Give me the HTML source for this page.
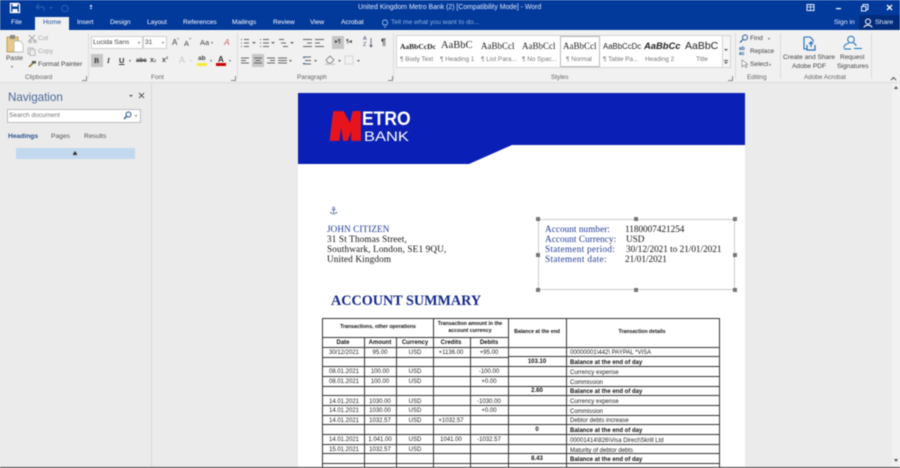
<!DOCTYPE html>
<html><head><meta charset="utf-8"><style>
html,body{margin:0;padding:0}
body{width:900px;height:468px;overflow:hidden;position:relative;background:#ebebeb;font-family:"Liberation Sans",sans-serif}
#w{position:absolute;left:0;top:0;width:900px;height:468px;overflow:hidden;filter:blur(.45px)}
.a{position:absolute}
.t{position:absolute;white-space:nowrap;line-height:1}
.u{font-size:6.6px;color:#444}
.g{font-size:6.4px;color:#666}
.tab{font-size:6.6px;color:#fff;top:20px}
.s{font-family:"Liberation Serif",serif;font-size:9.2px;color:#111}
.sb{font-family:"Liberation Serif",serif;font-size:9.2px;color:#1f3a93}
.sty{font-family:"Liberation Serif",serif;font-size:9px;color:#222;top:42px}
.lab{font-size:6.4px;color:#777;top:57px}
.h{position:absolute;background:#333;height:1px}
.v{position:absolute;background:#333;width:1px}
.c{position:absolute;white-space:nowrap;line-height:1;font-size:6px;color:#222;text-align:center;transform:translateX(-50%)}
.d{position:absolute;white-space:nowrap;line-height:1;font-size:6px;color:#222;left:570px}
.b{font-weight:bold;color:#111}
.k{font-size:5.2px}
.hd{position:absolute;width:4px;height:4px;background:#777}
.ar{position:absolute;border:1.5px solid transparent;border-top:2px solid #666}
.dl{position:absolute;width:4px;height:4px;border-right:1px solid #888;border-bottom:1px solid #888}
.sep{position:absolute;top:33px;width:1px;height:46px;background:#dcdcdc}
</style></head><body><div id="w">

<div class="a" style="left:0;top:0;width:900px;height:30px;background:#023a9c"></div>
<div class="a" style="left:0;top:30px;width:900px;height:52px;background:#f1f1f1"></div>
<div class="a" style="left:0;top:82px;width:900px;height:1px;background:#dcdcdc"></div>
<div class="a" style="left:35px;top:17px;width:34px;height:13px;background:#f1f1f1"></div>

<svg class="a" style="left:9px;top:2px" width="12" height="12" viewBox="0 0 12 12"><path d="M1.5 1.5h8l1 1v8h-9z" fill="none" stroke="#fff" stroke-width="1.3"/><rect x="3.5" y="1.5" width="5" height="3" fill="#fff"/><rect x="3.5" y="7" width="5" height="3.5" fill="#fff"/></svg>
<svg class="a" style="left:34px;top:2px" width="60" height="12" viewBox="0 0 60 12"><path d="M2 5l3-3M2 5l3 2M2 5h6c2 0 3 2 2 4" fill="none" stroke="#2a5cb0" stroke-width="1.2"/><path d="M15 5l2 2 2-2" fill="#2a5cb0"/><circle cx="31" cy="6.5" r="3.2" fill="none" stroke="#2a5cb0" stroke-width="1.2"/></svg>
<div class="a" style="left:90px;top:5px;width:2px;height:2px;background:#cfe0f5"></div>
<div class="a" style="left:90px;top:8px;width:2px;height:1px;background:#cfe0f5"></div>

<div class="t" style="left:358px;top:4.5px;font-size:6.9px;color:#dfe8f7">United Kingdom Metro Bank (2) [Compatibility Mode] - Word</div>

<div class="t tab" style="left:11px;font-size:6.8px">File</div>
<div class="t tab" style="left:43px;color:#1e4c9a;font-size:6.8px">Home</div>
<div class="t tab" style="left:77px">Insert</div>
<div class="t tab" style="left:110px">Design</div>
<div class="t tab" style="left:147px">Layout</div>
<div class="t tab" style="left:183px">References</div>
<div class="t tab" style="left:232px">Mailings</div>
<div class="t tab" style="left:273px">Review</div>
<div class="t tab" style="left:310px">View</div>
<div class="t tab" style="left:341px">Acrobat</div>
<svg class="a" style="left:381px;top:19px" width="8" height="9" viewBox="0 0 8 9"><path d="M2.5 6C1 4.5 1 1 4 1s3 3.5 1.500 5zM3 8h2" fill="none" stroke="#8fb4e8" stroke-width=".9"/></svg>
<div class="t tab" style="left:391px;color:#8fb0e0;font-size:6.7px">Tell me what you want to do...</div>

<svg class="a" style="left:804px;top:2px" width="90" height="12" viewBox="0 0 90 12"><rect x="3" y="2.5" width="7" height="6" fill="none" stroke="#e8eefa" stroke-width="1"/><path d="M6.5 3v5M3 5h7" stroke="#e8eefa" stroke-width=".8"/><rect x="32" y="6" width="5" height="1.2" fill="#fff"/><rect x="59" y="2.500" width="5" height="5" fill="none" stroke="#e8eefa"/><rect x="57.5" y="4.5" width="4.5" height="4.5" fill="#023a9c" stroke="#e8eefa"/><path d="M83 3l5 5M88 3l-5 5" stroke="#fff" stroke-width="1.3"/></svg>
<div class="a" style="left:859px;top:15px;width:41px;height:15px;background:#012c7c"></div>
<div class="t" style="left:834px;top:20px;font-size:6.8px;color:#e4ecfa">Sign in</div>
<svg class="a" style="left:863px;top:18px" width="10" height="10" viewBox="0 0 10 10"><circle cx="5" cy="3.5" r="2.5" fill="none" stroke="#fff"/><path d="M1 9.500c.5-3 7.500-3 8 0" fill="none" stroke="#fff"/></svg>
<div class="t" style="left:875px;top:20px;font-size:6.8px;color:#e4ecfa">Share</div>

<!-- Clipboard -->
<svg class="a" style="left:6px;top:34px" width="18" height="20" viewBox="0 0 18 20"><rect x="1" y="3" width="11" height="15" fill="#e8c98a" stroke="#a88848" stroke-width=".7"/><rect x="4" y="1" width="5" height="4" fill="#888"/><path d="M8 7h6l3 3v8H8z" fill="#fff" stroke="#aaa" stroke-width=".7"/></svg>
<div class="t u" style="left:6px;top:56px">Paste</div>
<div class="ar" style="left:11px;top:66px"></div>
<svg class="a" style="left:28px;top:34px" width="9" height="9" viewBox="0 0 9 9"><path d="M1 1l6 6M7 1L1 7" stroke="#aaa"/><circle cx="2" cy="7.5" r="1.3" fill="none" stroke="#aaa"/><circle cx="7" cy="7.5" r="1.3" fill="none" stroke="#aaa"/></svg>
<div class="t" style="left:38px;top:36px;font-size:6.5px;color:#a8a8a8">Cut</div>
<svg class="a" style="left:27px;top:47px" width="9" height="9" viewBox="0 0 9 9"><rect x="1" y="1" width="5" height="6" fill="none" stroke="#bbb"/><rect x="3" y="2.5" width="5" height="6" fill="#eee" stroke="#bbb"/></svg>
<div class="t" style="left:38px;top:49px;font-size:6.5px;color:#a8a8a8">Copy</div>
<svg class="a" style="left:28px;top:60px" width="9" height="8" viewBox="0 0 9 8"><path d="M1 7l4-4" stroke="#a08030" stroke-width="1.8"/><rect x="4" y="1" width="4" height="2.5" fill="#555"/></svg>
<div class="t u" style="left:38px;top:62px;font-size:6.7px">Format Painter</div>
<div class="t g" style="left:25px;top:75px">Clipboard</div>
<div class="dl" style="left:82px;top:76px"></div>
<div class="sep" style="left:88px"></div>

<!-- Font -->
<div class="a" style="left:91px;top:36px;width:52px;height:13px;background:#fff;border:1px solid #d0d0d0;box-sizing:border-box"></div>
<div class="a" style="left:143px;top:36px;width:24px;height:13px;background:#fff;border:1px solid #d0d0d0;box-sizing:border-box"></div>
<div class="t u" style="left:93px;top:40px">Lucida Sans</div>
<div class="t u" style="left:145px;top:40px">31</div>
<div class="ar" style="left:138px;top:42px"></div>
<div class="ar" style="left:162px;top:42px"></div>
<div class="t u" style="left:172px;top:39px;font-size:8px">A</div><div class="t" style="left:177px;top:37px;font-size:4px;color:#444">˄</div>
<div class="t u" style="left:184px;top:40px;font-size:7.5px">A</div><div class="t" style="left:189px;top:37px;font-size:4px;color:#444">˅</div>
<div class="t u" style="left:200px;top:39px;font-size:7.5px">Aa</div>
<div class="ar" style="left:211px;top:42px"></div>
<div class="t" style="left:224px;top:38px;font-size:8.5px;color:#c66;font-style:italic">A</div>
<div class="a" style="left:91px;top:54px;width:12px;height:13px;background:#c6c6c6"></div>
<div class="t" style="left:94px;top:57px;font-size:7.5px;font-weight:bold;color:#333;font-family:'Liberation Serif',serif">B</div>
<div class="t" style="left:107px;top:57px;font-size:7.5px;font-style:italic;font-weight:bold;color:#333;font-family:'Liberation Serif',serif">I</div>
<div class="t" style="left:119px;top:57px;font-size:7.5px;font-weight:bold;color:#333;text-decoration:underline">U</div>
<div class="ar" style="left:129px;top:60px"></div>
<div class="t" style="left:136px;top:58px;font-size:6.2px;font-weight:bold;color:#444;text-decoration:line-through">abc</div>
<div class="t u" style="left:150px;top:57px;font-size:7px;font-weight:bold">x<span style="font-size:4px">2</span></div>
<div class="t u" style="left:162px;top:57px;font-size:7px;font-weight:bold">x<span style="font-size:4px;position:relative;top:-3px">2</span></div>
<div class="t" style="left:179px;top:56px;font-size:9px;color:#c8c8c8">A</div>
<div class="ar" style="left:190px;top:60px;border-top-color:#ccc"></div>
<div class="t" style="left:198px;top:56px;font-size:6.5px;color:#444;font-weight:bold">ab</div>
<div class="a" style="left:197px;top:63px;width:10px;height:3px;background:#f2ec30"></div>
<div class="ar" style="left:210px;top:60px"></div>
<div class="t" style="left:218px;top:56px;font-size:8px;color:#333;font-weight:bold">A</div>
<div class="a" style="left:216px;top:63px;width:10px;height:2.5px;background:#c00"></div>
<div class="ar" style="left:229px;top:60px"></div>
<div class="t g" style="left:151px;top:75px">Font</div>
<div class="dl" style="left:231px;top:76px"></div>
<div class="sep" style="left:237px"></div>

<!-- Paragraph -->
<div class="a" style="left:252px;top:54px;width:12px;height:13px;background:#c8c8c8"></div>
<div class="a" style="left:332px;top:36px;width:12px;height:13px;background:#c6c6c6"></div>
<svg class="a" style="left:240px;top:37px" width="150" height="30" viewBox="0 0 150 30">
<g stroke="#666" stroke-width=".9" fill="none">
<path d="M1 2.5h1M4 2.5h5M1 6h1M4 6h5M1 9.500h1M4 9.500h5"/>
<path d="M20 2.5h1M23 2.5h6M20 6h1M23 6h6M20 9.5h1M23 9.5h6"/>
<path d="M39 2.5h5M41 6h5M43 9.5h5"/>
<path d="M63 2.5h9M67 6h5M63 9.5h9M75 2.5h9M75 6h5M75 9.5h9"/>
<path d="M1 21h8M1 23.500h5M1 26h8M14 21h8M15.500 23.500h5M14 26h8M27 21h8M30 23.500h5M27 26h8M38 21h9M38 23.500h9M38 26h9"/>
<path d="M65 20h6M65 23.500h6M65 27h6"/>
</g>
<path d="M62.500 21l1.500-2 1.500 2zM62.500 26l1.500 2 1.500-2z" fill="#3a6aa8"/>
<path d="M12 5l2 2 2-2zM31 5l2 2 2-2zM50 5l2 2 2-2zM49 23l1.500 2 1.500-2zM74 23l1.500 2 1.500-2zM98 23l1.500 2 1.500-2zM117 23l1.500 2 1.500-2z" fill="#666"/>
<path d="M86 23l4-4 4 4-3 3h-3z" fill="none" stroke="#777" stroke-width=".8"/>
<rect x="85" y="26.500" width="10" height="1.500" fill="#ccc"/>
<rect x="105" y="19" width="8" height="8" fill="none" stroke="#aaa" stroke-width=".8" stroke-dasharray="1 1"/>
</svg>
<div class="t u" style="left:335px;top:40px;font-weight:bold;font-size:5.5px">▸¶</div>
<div class="t u" style="left:346px;top:40px;font-weight:bold;font-size:5.5px">¶◂</div>
<div class="t" style="left:363px;top:37px;font-size:5.5px;color:#446;line-height:5.5px;white-space:normal;width:8px">A<br>Z</div>
<svg class="a" style="left:369px;top:38px" width="4" height="10" viewBox="0 0 4 10"><path d="M2 0v9M.5 7L2 9l1.500-2" fill="none" stroke="#557" stroke-width=".8"/></svg>
<div class="t" style="left:381px;top:38px;font-size:9px;color:#444;font-weight:bold">¶</div>
<div class="t g" style="left:297px;top:75px">Paragraph</div>
<div class="dl" style="left:388px;top:76px"></div>
<div class="sep" style="left:393px"></div>

<!-- Styles -->
<div class="a" style="left:396px;top:35px;width:335px;height:33px;background:#fff;border:1px solid #d4d4d4;box-sizing:border-box"></div>
<div class="a" style="left:560px;top:36px;width:40px;height:31px;border:1.5px solid #b8b8b8;box-sizing:border-box"></div>
<div class="t sty" style="left:400px;top:43px;font-size:7.5px;font-weight:bold">AaBbCcDc</div>
<div class="t sty" style="left:441px;top:41px;font-size:10.5px">AaBbC</div>
<div class="t sty" style="left:481px;top:42px;font-size:9px">AaBbCcl</div>
<div class="t sty" style="left:522px;top:42px;font-size:9px">AaBbCcl</div>
<div class="t sty" style="left:563px;top:42px;font-size:9px">AaBbCcl</div>
<div class="t sty" style="left:603px;top:43px;font-size:7.8px;font-family:'Liberation Sans',sans-serif">AaBbCcDc</div>
<div class="t sty" style="left:644px;top:41px;font-size:9.4px;font-family:'Liberation Sans',sans-serif;font-style:italic;font-weight:bold">AaBbCc</div>
<div class="t sty" style="left:685px;top:41px;font-size:10.5px;font-family:'Liberation Sans',sans-serif">AaBbC</div>
<div class="t lab" style="left:400px">¶ Body Text</div>
<div class="t lab" style="left:440px">¶ Heading 1</div>
<div class="t lab" style="left:481px">¶ List Para...</div>
<div class="t lab" style="left:522px">¶ No Spac...</div>
<div class="t lab" style="left:566px">¶ Normal</div>
<div class="t lab" style="left:603px">¶ Table Pa...</div>
<div class="t lab" style="left:645px">Heading 2</div>
<div class="t lab" style="left:696px">Title</div>
<div class="a" style="left:722px;top:35px;width:9px;height:33px;background:#f6f6f6;border:1px solid #d4d4d4;box-sizing:border-box"></div>
<div class="a" style="left:724px;top:49px;border:2px solid transparent;border-top:2px solid #555"></div>
<div class="a" style="left:724px;top:60px;width:4px;height:1px;background:#555"></div>
<div class="a" style="left:724px;top:62px;border:2px solid transparent;border-top:2px solid #555"></div>
<div class="t g" style="left:551px;top:75px">Styles</div>
<div class="dl" style="left:728px;top:76px"></div>
<div class="sep" style="left:735px"></div>

<!-- Editing -->
<svg class="a" style="left:739px;top:34px" width="10" height="9" viewBox="0 0 10 9"><circle cx="6" cy="3.5" r="2.5" fill="none" stroke="#2b5c9e" stroke-width="1"/><path d="M4 5.5L1 8.5" stroke="#2b5c9e" stroke-width="1.2"/></svg>
<div class="t u" style="left:750px;top:36px">Find</div>
<div class="ar" style="left:768px;top:38px"></div>
<div class="t" style="left:739px;top:47px;font-size:5px;line-height:5px;color:#2b5c9e;white-space:normal;width:9px;font-weight:bold">ab<br>ac</div>
<div class="t u" style="left:750px;top:49px">Replace</div>
<svg class="a" style="left:741px;top:59px" width="7" height="9" viewBox="0 0 7 9"><path d="M1 1v7l2-2 2 2.5 1-.5-1.500-2.500H7z" fill="#fff" stroke="#888" stroke-width=".7"/></svg>
<div class="t u" style="left:750px;top:62px">Select</div>
<div class="ar" style="left:769px;top:64px"></div>
<div class="t g" style="left:747px;top:75px">Editing</div>
<div class="sep" style="left:780px"></div>

<!-- Acrobat -->
<svg class="a" style="left:802px;top:36px" width="16" height="16" viewBox="0 0 16 16"><path d="M2 1h6l3 3v2M2 1v12h3" fill="none" stroke="#1f6fb8" stroke-width="1.1"/><path d="M5 9v5h8V9M9 11V6M7 8l2-2 2 2" fill="none" stroke="#1f6fb8" stroke-width="1.2"/></svg>
<svg class="a" style="left:843px;top:35px" width="20" height="17" viewBox="0 0 20 17"><circle cx="8" cy="4.500" r="3.300" fill="none" stroke="#1f6fb8" stroke-width="1"/><path d="M1 13c0-4 3-4 5-5M10 8c2 .5 3 1.500 3 3" fill="none" stroke="#1f6fb8" stroke-width="1"/><path d="M1 14h7M11 13.500h8" stroke="#1f6fb8" stroke-width="1"/></svg>
<div class="t u" style="left:783px;top:55px">Create and Share</div>
<div class="t u" style="left:792px;top:64px">Adobe PDF</div>
<div class="t u" style="left:840px;top:55px">Request</div>
<div class="t u" style="left:837px;top:64px">Signatures</div>
<div class="t g" style="left:804px;top:75px">Adobe Acrobat</div>
<div class="sep" style="left:871px"></div>
<svg class="a" style="left:890px;top:76px" width="7" height="5" viewBox="0 0 7 5"><path d="M1 4l2.500-2.500L6 4" fill="none" stroke="#555"/></svg>

<!-- Nav pane -->
<div class="a" style="left:0;top:83px;width:151px;height:385px;background:#ebebeb;border-right:1px solid #d8d8d8"></div>
<div class="t" style="left:8px;top:92px;font-size:11.6px;color:#4a6898">Navigation</div>
<div class="a" style="left:129px;top:95px;border:2px solid transparent;border-top:2.5px solid #555"></div>
<svg class="a" style="left:138px;top:92px" width="7" height="7" viewBox="0 0 7 7"><path d="M1 1l5 5M6 1L1 6" stroke="#555" stroke-width="1"/></svg>
<div class="a" style="left:7px;top:109px;width:134px;height:14px;background:#fff;border:1px solid #bdbdbd;box-sizing:border-box"></div>
<div class="t" style="left:9px;top:113px;font-size:6.5px;color:#777">Search document</div>
<svg class="a" style="left:123px;top:111px" width="9" height="9" viewBox="0 0 9 9"><circle cx="5.5" cy="3.5" r="2.5" fill="none" stroke="#1f4f8f" stroke-width="1"/><path d="M3.500 5.500L1 8" stroke="#1f4f8f" stroke-width="1.3"/></svg>
<div class="ar" style="left:135px;top:115px"></div>
<div class="t" style="left:8px;top:134px;font-size:6.7px;font-weight:bold;color:#2c5290">Headings</div>
<div class="t" style="left:51px;top:134px;font-size:6.7px;color:#555">Pages</div>
<div class="t" style="left:84px;top:134px;font-size:6.7px;color:#555">Results</div>
<div class="a" style="left:16px;top:148px;width:119px;height:11px;background:#c2d8ef"></div>
<div class="a" style="left:73px;top:151px;border-left:2px solid transparent;border-right:2px solid transparent;border-bottom:3px solid #333"></div>
<div class="a" style="left:73px;top:154px;width:4px;height:1px;background:#333"></div>

<!-- doc -->
<div class="a" style="left:892px;top:83px;width:8px;height:385px;background:#f1f1f1"></div>
<svg class="a" style="left:893px;top:85px" width="6" height="5" viewBox="0 0 6 5"><path d="M3 1L1 4h4z" fill="#555"/></svg>
<svg class="a" style="left:893px;top:458px" width="6" height="5" viewBox="0 0 6 5"><path d="M3 4L1 1h4z" fill="#555"/></svg>
<div class="a" style="left:298px;top:93px;width:447px;height:375px;background:#fff"></div>
<svg class="a" style="left:298px;top:93px" width="447" height="72" viewBox="0 0 447 72"><path d="M0 0H447V52H214L171 71H0z" fill="#0a1fb5"/></svg>

<!-- logo -->
<svg class="a" style="left:326px;top:109px" width="38" height="35" viewBox="0 0 38 35"><path d="M4 31.500L7.500 2.500H17.500L24 15 27 2.500H34.500V31.500H25.500V20L21.500 31.500H17.500L15 16 13 31.500z" fill="#e8141c" stroke="#e8141c" stroke-width=".8" stroke-linejoin="round"/></svg>
<div class="t" style="left:361.5px;top:109.5px;font-size:19px;font-weight:bold;color:#fff;transform:scaleX(.92);transform-origin:left top">ETRO</div>
<div class="t" style="left:364px;top:130.2px;font-size:13.5px;color:#fff;transform:scaleX(1.22);transform-origin:left top">BANK</div>

<div class="t" style="left:329px;top:207px;font-size:10px;color:#3a5a9a;font-family:'DejaVu Sans',sans-serif">⚓</div>
<div class="t sb" style="left:327px;top:225px;letter-spacing:.08px">JOHN CITIZEN</div>
<div class="t s" style="left:327px;top:235px;letter-spacing:.15px">31 St Thomas Street,</div>
<div class="t s" style="left:327px;top:245px;letter-spacing:.15px">Southwark, London, SE1 9QU,</div>
<div class="t s" style="left:327px;top:255px;letter-spacing:.15px">United Kingdom</div>

<!-- selection box -->
<div class="a" style="left:538px;top:219px;width:197px;height:71px;border:1px dotted #999;box-sizing:border-box"></div>
<div class="hd" style="left:536px;top:217px"></div><div class="hd" style="left:634px;top:217px"></div><div class="hd" style="left:733px;top:217px"></div>
<div class="hd" style="left:536px;top:253px"></div><div class="hd" style="left:733px;top:253px"></div>
<div class="hd" style="left:536px;top:288px"></div><div class="hd" style="left:634px;top:288px"></div><div class="hd" style="left:733px;top:288px"></div>
<div class="t sb" style="left:545px;top:225px;letter-spacing:.06px">Account number:</div>
<div class="t sb" style="left:545px;top:235px;letter-spacing:.06px">Account Currency:</div>
<div class="t sb" style="left:545px;top:245px;letter-spacing:.3px">Statement period:</div>
<div class="t sb" style="left:545px;top:255px;letter-spacing:.33px">Statement date:</div>
<div class="t s" style="left:625px;top:225px">1180007421254</div>
<div class="t s" style="left:626px;top:235px">USD</div>
<div class="t s" style="left:626px;top:245px">30/12/2021 to 21/01/2021</div>
<div class="t s" style="left:625px;top:255px">21/01/2021</div>

<div class="t" style="left:331px;top:294px;font-family:'Liberation Serif',serif;font-size:14.2px;font-weight:bold;color:#15288a">ACCOUNT SUMMARY</div>

<!-- table lines -->
<div class="h" style="left:322px;top:318px;width:398px"></div>
<div class="h" style="left:322px;top:337px;width:186px"></div>
<div class="h" style="left:322px;top:347px;width:398px"></div>
<div class="h" style="left:322px;top:357px;width:186px"></div><div class="h" style="left:508px;top:356px;width:212px"></div>
<div class="h" style="left:322px;top:366px;width:398px"></div>
<div class="h" style="left:322px;top:376px;width:398px"></div>
<div class="h" style="left:322px;top:386px;width:398px"></div>
<div class="h" style="left:322px;top:395px;width:398px"></div>
<div class="h" style="left:322px;top:405px;width:398px"></div>
<div class="h" style="left:322px;top:415px;width:398px"></div>
<div class="h" style="left:322px;top:424px;width:398px"></div>
<div class="h" style="left:322px;top:434px;width:398px"></div>
<div class="h" style="left:322px;top:444px;width:398px"></div>
<div class="h" style="left:322px;top:453px;width:398px"></div>
<div class="h" style="left:322px;top:463px;width:398px"></div>
<div class="v" style="left:322px;top:318px;height:150px"></div>
<div class="v" style="left:364px;top:337px;height:131px"></div>
<div class="v" style="left:396px;top:337px;height:131px"></div>
<div class="v" style="left:433px;top:318px;height:150px"></div>
<div class="v" style="left:470px;top:337px;height:131px"></div>
<div class="v" style="left:508px;top:318px;height:150px"></div>
<div class="v" style="left:566px;top:318px;height:150px"></div>
<div class="v" style="left:719px;top:318px;height:150px"></div>
<div class="a" style="left:0;top:466.5px;width:900px;height:2px;background:#3a3a3a"></div>

<!-- table headers -->
<div class="c b k" style="left:378px;top:325px">Transactions, other operations</div>
<div class="c b k" style="left:470px;top:322px">Transaction amount in the</div>
<div class="c b k" style="left:470px;top:329px">account currency</div>
<div class="c b k" style="left:537px;top:330px">Balance at the end</div>
<div class="c b k" style="left:642px;top:330px">Transaction details</div>
<div class="c b" style="left:343px;top:340px">Date</div>
<div class="c b" style="left:380px;top:340px">Amount</div>
<div class="c b" style="left:415px;top:340px">Currency</div>
<div class="c b" style="left:451px;top:340px">Credits</div>
<div class="c b" style="left:489px;top:340px">Debits</div>

<!-- rows -->
<div class="c" style="left:344px;top:350px">30/12/2021</div><div class="c" style="left:380px;top:350px">95.00</div><div class="c" style="left:415px;top:350px">USD</div><div class="c" style="left:451px;top:350px">+1136.00</div><div class="c" style="left:489px;top:350px">+95.00</div>
<div class="c" style="left:344px;top:369px">08.01.2021</div><div class="c" style="left:380px;top:369px">100.00</div><div class="c" style="left:415px;top:369px">USD</div><div class="c" style="left:489px;top:369px">-100.00</div>
<div class="c" style="left:344px;top:379px">08.01.2021</div><div class="c" style="left:380px;top:379px">100.00</div><div class="c" style="left:415px;top:379px">USD</div><div class="c" style="left:489px;top:379px">+0.00</div>
<div class="c" style="left:344px;top:399px">14.01.2021</div><div class="c" style="left:380px;top:399px">1030.00</div><div class="c" style="left:415px;top:399px">USD</div><div class="c" style="left:489px;top:399px">-1030.00</div>
<div class="c" style="left:344px;top:408px">14.01.2021</div><div class="c" style="left:380px;top:408px">1030.00</div><div class="c" style="left:415px;top:408px">USD</div><div class="c" style="left:489px;top:408px">+0.00</div>
<div class="c" style="left:344px;top:418px">14.01.2021</div><div class="c" style="left:380px;top:418px">1032.57</div><div class="c" style="left:415px;top:418px">USD</div><div class="c" style="left:451px;top:418px">+1032.57</div>
<div class="c" style="left:344px;top:437px">14.01.2021</div><div class="c" style="left:380px;top:437px">1.041.00</div><div class="c" style="left:415px;top:437px">USD</div><div class="c" style="left:451px;top:437px">1041.00</div><div class="c" style="left:489px;top:437px">-1032.57</div>
<div class="c" style="left:344px;top:447px">15.01.2021</div><div class="c" style="left:380px;top:447px">1032.57</div><div class="c" style="left:415px;top:447px">USD</div>

<div class="c b" style="left:537px;top:359px">103.10</div>
<div class="c b" style="left:537px;top:388px">2.60</div>
<div class="c b" style="left:537px;top:427px">0</div>
<div class="c b" style="left:537px;top:456px">8.43</div>

<div class="d" style="top:350px">00000001\442\ PAYPAL *VISA</div>
<div class="d b" style="top:360px">Balance at the end of day</div>
<div class="d" style="top:370px">Currency expense</div>
<div class="d" style="top:380px">Commission</div>
<div class="d b" style="top:389px">Balance at the end of day</div>
<div class="d" style="top:399px">Currency expense</div>
<div class="d" style="top:409px">Commission</div>
<div class="d" style="top:418px">Debtor debts increase</div>
<div class="d b" style="top:428px">Balance at the end of day</div>
<div class="d" style="top:438px">00001414\826\Visa Direct\Skrill Ltd</div>
<div class="d" style="top:448px">Maturity of debtor debts</div>
<div class="d b" style="top:457px">Balance at the end of day</div>

</div></body></html>
